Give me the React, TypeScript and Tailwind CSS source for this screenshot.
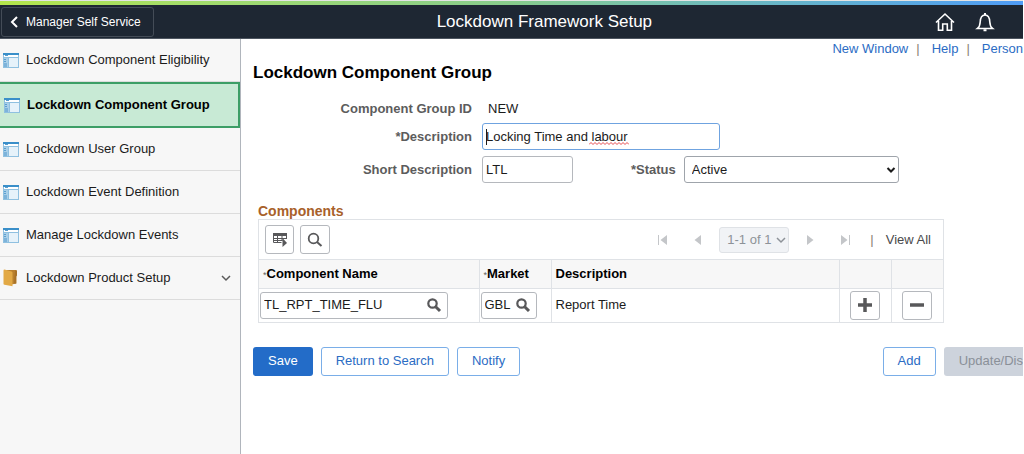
import { useState } from "react";
import type { ReactNode } from "react";

const navItems = [
  "Lockdown Component Eligibility",
  "Lockdown Component Group",
  "Lockdown User Group",
  "Lockdown Event Definition",
  "Manage Lockdown Events",
];

function PageIcon() {
  return (
    <svg className="h-4 w-4 shrink-0" viewBox="0 0 16 16" aria-hidden="true">
      <rect x="0" y="1" width="16" height="15" fill="#8fc0e0" />
      <rect x="0" y="1" width="16" height="2" fill="#3a8fc9" />
      <rect x="1" y="3" width="14" height="2" fill="#fff" />
      <rect x="2" y="3" width="3" height="1" fill="#5b9fd0" />
      <rect x="1" y="6" width="4" height="9" fill="#a9cfe8" />
      <rect x="1" y="7" width="2" height="1" fill="#5b9fd0" />
      <rect x="1" y="9" width="2" height="1" fill="#5b9fd0" />
      <rect x="1" y="11" width="3" height="4" fill="#7db3da" />
      <rect x="6" y="6" width="9" height="9" fill="#e6f2fa" />
    </svg>
  );
}

function FolderIcon() {
  return (
    <svg className="h-5 w-4 shrink-0" viewBox="0 0 16 20" aria-hidden="true">
      <path d="M3 2h10.500v13.500l-5 1z" fill="#b9802f" />
      <path d="M12 2.500h2v5l-1 1v7h-2z" fill="#a87228" />
      <path d="M0.500 2.500q0-1 1-1l7 2q1 .3 1 1.300v13.500l-8-1.500q-1-.2-1-1z" fill="#e2a945" />
    </svg>
  );
}

function SearchIcon({ bold = false }: { bold?: boolean }) {
  return (
    <svg className="h-4 w-4" viewBox="0 0 16 16" fill="none" stroke="#58585a" strokeWidth={bold ? 2.2 : 1.8} aria-hidden="true">
      <circle cx="6.500" cy="6.500" r={bold ? 4.2 : 4.8} />
      <path d={bold ? "M9.700 9.700L14 14" : "M10 10l4.500 4"} strokeWidth={bold ? 3 : 2} />
    </svg>
  );
}

function GridIcon() {
  return (
    <svg className="h-4 w-4" viewBox="0 0 16 16" aria-hidden="true">
      <path d="M1 1h14v3H1z" fill="#58585a" />
      <path d="M1.500 4v6.500h8M1.500 6.500h13M1.500 8.500h9M5.500 4v6.500M10 4v5M14.500 4v3" fill="none" stroke="#58585a" />
      <path d="M10.500 6l4.500 5-4.500 4z" fill="#58585a" />
    </svg>
  );
}

function Chevron({ className }: { className?: string }) {
  return (
    <svg className={`h-3 w-3 ${className ?? ""}`} viewBox="0 0 12 12" fill="none" stroke="currentColor" strokeWidth="1.500" aria-hidden="true">
      <path d="M2 4l4 4 4-4" />
    </svg>
  );
}

function Pager({ label, children }: { label: string; children: ReactNode }) {
  return (
    <button type="button" disabled aria-label={label} className="flex h-7 w-7 items-center justify-center">
      <svg className="h-3 w-3" viewBox="0 0 12 12" fill="#c4c6c9" aria-hidden="true">
        {children}
      </svg>
    </button>
  );
}

const boxButton = "flex items-center justify-center rounded-[3px] border border-[#b5b8bd] bg-white";
const blueButton = "h-[29px] rounded-[3px] border border-[#7aaee8] bg-white px-[14px] text-[#2b6cc4]";
const fieldLabel = "text-right font-bold text-[#5c5c5c]";
const headCell = "border-r border-[#dfe2e6] px-1 text-left font-bold text-black";
const bodyCell = "border-r border-[#dfe2e6]";
const star = "text-[9px] leading-none font-normal text-[#5c5c5c]";

export default function App() {
  const [description, setDescription] = useState("Locking Time and labour");
  const [shortDescription, setShortDescription] = useState("LTL");
  const [component, setComponent] = useState("TL_RPT_TIME_FLU");
  const [market, setMarket] = useState("GBL");

  return (
    <div className="flex min-h-screen flex-col overflow-hidden bg-white pr-px font-['Liberation_Sans',Arial,sans-serif] text-[13px] leading-4 text-[#1b1b1b]">
      <div className="h-px bg-[#e4e4e4]" />
      <div className="h-1 bg-linear-to-r from-[#b4e64b] via-[#88cc8c] to-[#4f9bf5]" />
      <header className="flex h-[34px] items-center border-b border-[#4d5560] bg-[#1e2733] pl-px text-white">
        <button type="button" className="flex h-[30px] items-center gap-2 rounded-[3px] border border-[#444c57] pr-3 pl-2 text-xs">
          <svg className="h-3 w-2" viewBox="0 0 8 12" fill="none" stroke="#fff" strokeWidth="2" aria-hidden="true">
            <path d="M7 1L2 6l5 5" />
          </svg>
          Manager Self Service
        </button>
        <h1 className="flex-1 text-center text-[17px]">Lockdown Framework Setup</h1>
        <div className="flex gap-5 pr-7">
          <button type="button" aria-label="Home">
            <svg className="h-5 w-5" viewBox="0 0 20 20" fill="none" stroke="#fff" strokeWidth="1.600" aria-hidden="true">
              <path d="M1 10.500L10 2l9 8.500M3.500 9v9.200h4.200V12h4.600v6.200h4.200V9" />
            </svg>
          </button>
          <button type="button" aria-label="Notifications">
            <svg className="h-5 w-5" viewBox="0 0 20 20" fill="none" stroke="#fff" strokeWidth="1.600" aria-hidden="true">
              <path d="M2.500 16.500h15c-2-1.500-2.500-3-2.700-6.500C14.600 5.500 13 3 10 3S5.400 5.500 5.200 10c-.2 3.500-.7 5-2.700 6.500z" />
              <path d="M10 1v2M8.500 18.200h3" strokeWidth="2" />
            </svg>
          </button>
        </div>
      </header>

      <div className="flex flex-1">
        <nav className="w-[241px] shrink-0 border-r border-[#b0b5bc] bg-[#f7f7f7]">
          {navItems.map((item) =>
            item === "Lockdown Component Group" ? (
              <a key={item} href="#" aria-current="page" className="flex h-[46px] items-center gap-[7px] border-y-2 border-r-2 border-[#3c9e66] bg-[#c8ead5] pl-1 font-bold text-black">
                <PageIcon />
                {item}
              </a>
            ) : (
              <a key={item} href="#" className="flex h-[43px] items-center gap-[7px] border-b border-[#dcdcdc] pl-[3px]">
                <PageIcon />
                {item}
              </a>
            ),
          )}
          <a href="#" className="flex h-[43px] items-center gap-[7px] border-b border-[#dcdcdc] pr-2 pl-[3px]">
            <FolderIcon />
            <span className="flex-1">Lockdown Product Setup</span>
            <Chevron className="text-[#5a5a5a]" />
          </a>
        </nav>

        <main className="min-w-0 flex-1 overflow-hidden pl-3">
          <div className="flex justify-end gap-3 pt-[2px] whitespace-nowrap text-[#2b6cc4]">
            <div className="flex gap-2">
              <a href="#">New Window</a>
              <span className="text-[#8a7f72]">|</span>
            </div>
            <div className="flex gap-2">
              <a href="#">Help</a>
              <span className="text-[#8a7f72]">|</span>
            </div>
            <a href="#">Person</a>
          </div>

          <h2 className="pt-[6px] text-[17px] leading-5 font-bold text-black">Lockdown Component Group</h2>

          <div className="mt-3 grid grid-cols-[219px_auto_1fr] items-center gap-x-[10px]">
            <span className={fieldLabel}>Component Group ID</span>
            <span className="col-span-2 flex h-7 items-center pl-[6px]">NEW</span>
            <label htmlFor="descr" className={fieldLabel}>*Description</label>
            <div className="relative col-span-2 w-[238px]">
              <input id="descr" spellCheck={false} value={description} onChange={(e) => setDescription(e.target.value)} className="block h-[27px] w-full rounded-[3px] border border-[#6fa3e0] px-[3px] outline-none" />
              {/* text caret and spelling mark */}
              <span className="absolute top-[6px] left-1 h-4 w-px bg-[#1b1b1b]" />
              <svg className="pointer-events-none absolute top-[19px] left-[107px] h-[3px] w-10" viewBox="0 0 40 3" fill="none" stroke="#e5484d" aria-hidden="true">
                <path d="M0 2.500l2-2 2 2 2-2 2 2 2-2 2 2 2-2 2 2 2-2 2 2 2-2 2 2 2-2 2 2 2-2 2 2 2-2 2 2 2-2 2 2" />
              </svg>
            </div>
            <label htmlFor="short" className={`${fieldLabel} mt-[6px]`}>Short Description</label>
            <input id="short" value={shortDescription} onChange={(e) => setShortDescription(e.target.value)} className="mt-[6px] h-[27px] w-[91px] rounded-[3px] border border-[#b5b8bd] px-[3px]" />
            <div className="mt-[6px] flex items-center gap-2 pl-12">
              <label htmlFor="status" className="font-bold text-[#5c5c5c]">*Status</label>
              <div className="relative w-[215px]">
                <select id="status" className="block h-[27px] w-full appearance-none rounded-[3px] border border-[#9fa4ab] bg-white px-[7px]">
                  <option>Active</option>
                </select>
                <svg className="pointer-events-none absolute top-2 right-[2px] h-3 w-3" viewBox="0 0 12 12" fill="none" stroke="#1b1b1b" strokeWidth="2" aria-hidden="true">
                  <path d="M2.500 4L6 7.500 9.500 4" />
                </svg>
              </div>
            </div>
          </div>

          <section className="mt-5 ml-[5px] w-[686px]">
            <h3 className="text-sm leading-4 font-bold text-[#a8612a]">Components</h3>
            <div className="border border-[#dfe2e6]">
              <div className="flex h-[39px] items-center gap-[6px] px-[6px]">
                <button type="button" aria-label="Grid actions" className={`${boxButton} h-[29px] w-[29px]`}>
                  <GridIcon />
                </button>
                <button type="button" aria-label="Find" className={`${boxButton} h-[29px] w-[30px]`}>
                  <SearchIcon />
                </button>
                <div className="ml-auto flex items-center gap-[7px] pr-[6px]">
                  <Pager label="First">
                    <path d="M1 1h1v10H1zM10 1v10L3.500 6z" />
                  </Pager>
                  <Pager label="Previous">
                    <path d="M9 1v10L2.500 6z" />
                  </Pager>
                  <div className="relative w-[70px] text-[#8d9298]">
                    <select disabled aria-label="Rows" className="block h-[26px] w-full appearance-none rounded-[3px] border border-[#dfe2e6] bg-[#f1f3f6] pl-[7px] opacity-100">
                      <option>1-1 of 1</option>
                    </select>
                    <Chevron className="pointer-events-none absolute top-[7px] right-[2px]" />
                  </div>
                  <Pager label="Next">
                    <path d="M3 1v10l6.500-5z" />
                  </Pager>
                  <Pager label="Last">
                    <path d="M10 1h1v10h-1zM2 1v10l6.500-5z" />
                  </Pager>
                  <div className="flex gap-3 pl-1">
                    <span className="text-[#8a7f72]">|</span>
                    <a href="#" className="text-[#4a4a4a]">View All</a>
                  </div>
                </div>
              </div>
              <table className="w-full table-fixed border-collapse">
                <thead>
                  <tr className="h-[29px] border-y border-[#dfe2e6] bg-[#f7f7f7]">
                    <th scope="col" className={`${headCell} w-[220px]`}><span className={star}>*</span>Component Name</th>
                    <th scope="col" className={`${headCell} w-[72px]`}><span className={star}>*</span>Market</th>
                    <th scope="col" className={headCell}>Description</th>
                    <th scope="col" aria-label="Add" className={`${headCell} w-[52px]`} />
                    <th scope="col" aria-label="Remove" className="w-[52px]" />
                  </tr>
                </thead>
                <tbody>
                  <tr className="h-[33px]">
                    <td className={`${bodyCell} pl-px`}>
                      <div className={`${boxButton} h-[27px] w-[188px] pr-[5px]`}>
                        <input aria-label="Component Name" value={component} onChange={(e) => setComponent(e.target.value)} className="w-full min-w-0 pl-[3px] outline-none" />
                        <button type="button" aria-label="Look up component"><SearchIcon bold /></button>
                      </div>
                    </td>
                    <td className={`${bodyCell} pl-px`}>
                      <div className={`${boxButton} h-[27px] w-[56px] pr-[5px]`}>
                        <input aria-label="Market" value={market} onChange={(e) => setMarket(e.target.value)} className="w-full min-w-0 pl-[3px] outline-none" />
                        <button type="button" aria-label="Look up market"><SearchIcon bold /></button>
                      </div>
                    </td>
                    <td className={`${bodyCell} pl-1`}>Report Time</td>
                    <td className={bodyCell}>
                      <button type="button" aria-label="Add row" className={`${boxButton} mx-auto h-[29px] w-[30px]`}>
                        <svg className="h-4 w-4" viewBox="0 0 16 16" stroke="#58585a" strokeWidth="3.500" aria-hidden="true"><path d="M8 1v14M1 8h14" /></svg>
                      </button>
                    </td>
                    <td>
                      <button type="button" aria-label="Remove row" className={`${boxButton} mx-auto h-[29px] w-[30px]`}>
                        <svg className="h-4 w-4" viewBox="0 0 16 16" stroke="#58585a" strokeWidth="3.500" aria-hidden="true"><path d="M1 8h14" /></svg>
                      </button>
                    </td>
                  </tr>
                </tbody>
              </table>
            </div>
          </section>

          <div className="mt-6 flex gap-2 whitespace-nowrap">
            <button type="button" className="h-[29px] rounded-[3px] bg-[#236cc8] px-[15px] text-white">Save</button>
            <button type="button" className={blueButton}>Return to Search</button>
            <button type="button" className={blueButton}>Notify</button>
            <button type="button" className={`${blueButton} ml-auto`}>Add</button>
            <button type="button" disabled className="h-[29px] rounded-l-[3px] bg-[#cdd3dc] pl-[15px] text-[#8a9098]">Update/Dis</button>
          </div>
        </main>
      </div>
    </div>
  );
}
